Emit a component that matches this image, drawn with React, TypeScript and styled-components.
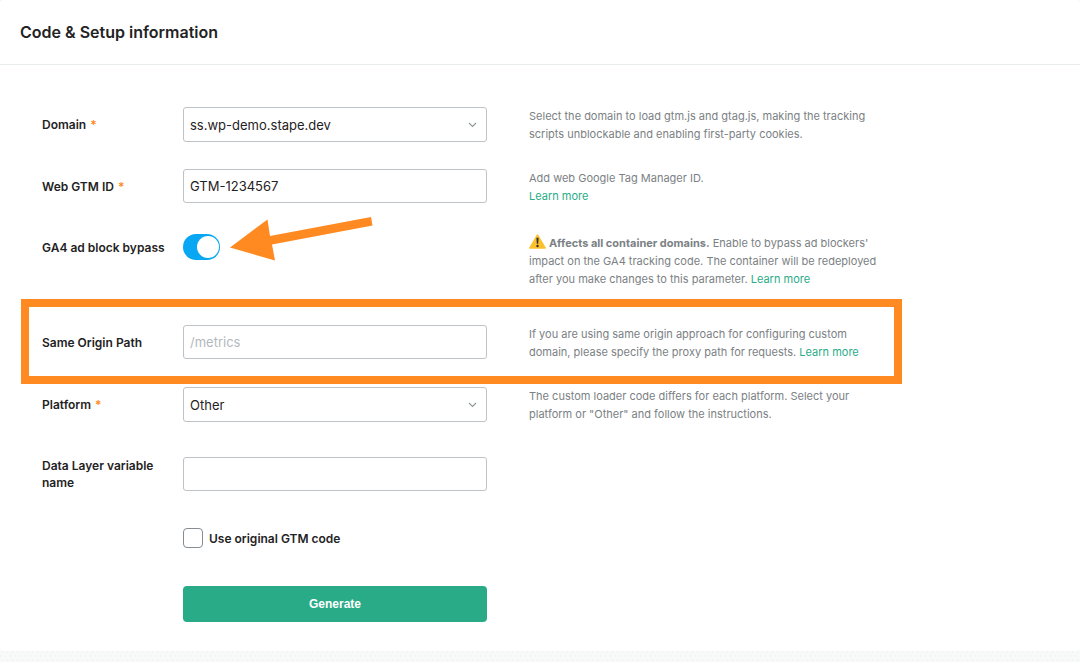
import React, { useState } from 'react';
import styled, { createGlobalStyle } from 'styled-components';

const GlobalStyle = createGlobalStyle`
  *, *::before, *::after { box-sizing: border-box; }
  body {
    margin: 0;
    min-height: 100vh;
    background-color: #f8faf9;
    background-image:
      radial-gradient(circle, #f0f3f3 1px, transparent 1px),
      radial-gradient(circle, #f0f3f3 1px, transparent 1px);
    background-size: 5px 8px;
    background-position: 0 0, 3px 4px;
    color: #1f2324;
    font-family: Inter, "Liberation Sans", sans-serif;
    font-size: 12px;
    line-height: 17px;
  }
`;

const Card = styled.main`
  background: #fff;
  border-radius: 4px;
`;

const Header = styled.header`
  padding: 20px;
  border-bottom: 1px solid #e8ebec;
`;

const Title = styled.h1`
  margin: 0;
  font-size: 16px;
  line-height: 24px;
  font-weight: 600;
`;

const Form = styled.form`
  padding: 42px 42px 29px;
`;

const Row = styled.div<{ $space?: number }>`
  position: relative;
  display: grid;
  grid-template-columns: 141px minmax(0, 304px) minmax(0, 400px);
  align-items: start;
  max-width: 845px;
  margin-top: ${({ $space = 0 }) => $space}px;
`;

const HighlightedRow = styled(Row)`
  &::after {
    content: '';
    position: absolute;
    inset: -26px -15px -23px -21px;
    border: 8px solid #ff8a22;
    pointer-events: none;
  }
`;

const Label = styled.label<{ $height?: number }>`
  display: flex;
  align-items: center;
  min-height: ${({ $height = 34 }) => $height}px;
  padding-right: 10px;
  font-weight: 600;
`;

const Required = styled.span`
  margin-left: 4px;
  color: #ff8a22;
`;

const Input = styled.input`
  width: 100%;
  height: 34px;
  padding: 0 6px;
  border: 1px solid #bdc3c6;
  border-radius: 3px;
  background: #fff;
  color: #1f2324;
  font: 400 13px/20px Inter, "Liberation Sans", sans-serif;
  &::placeholder { color: #b4b9bd; opacity: 1; }
`;

const SelectBox = styled.div`
  position: relative;
`;

const Select = styled.select`
  display: block;
  width: 100%;
  height: 35px;
  padding: 0 28px 0 6px;
  border: 1px solid #bdc3c6;
  border-radius: 3px;
  background: #fff;
  color: #1f2324;
  font: 400 13px/20px Inter, "Liberation Sans", sans-serif;
  appearance: none;
`;

const Chevron = styled.svg`
  position: absolute;
  top: 15px;
  right: 10px;
  width: 9px;
  height: 6px;
  pointer-events: none;
`;

const HelpText = styled.p`
  min-width: 0;
  margin: 0;
  padding-left: 42px;
  color: #7b8184;
  font-size: 11px;
  line-height: 18px;
`;

const Link = styled.a`
  color: #2aab87;
  text-decoration: none;
`;

const WarningIcon = styled.svg`
  width: 17px;
  height: 15px;
  margin-right: 3px;
  vertical-align: -2px;
`;

const SwitchBox = styled.div`
  position: relative;
  height: 26px;
`;

const Switch = styled.input`
  appearance: none;
  display: block;
  width: 37px;
  height: 26px;
  margin: 0;
  padding: 2px;
  border-radius: 13px;
  background: #c3c9cc;
  &::before {
    content: '';
    display: block;
    width: 22px;
    height: 22px;
    border-radius: 50%;
    background: #fff;
  }
  &:checked { background: #08a6f3; }
  &:checked::before { margin-left: 12px; }
`;

const Arrow = styled.svg`
  position: absolute;
  top: -18px;
  left: 46px;
  width: 146px;
  height: 46px;
  pointer-events: none;
`;

const CheckLabel = styled.label`
  grid-column: 2;
  display: flex;
  align-items: center;
  gap: 6px;
  font-weight: 600;
`;

const Checkbox = styled.input`
  appearance: none;
  width: 20px;
  height: 20px;
  margin: 0;
  border: 1px solid #858c92;
  border-radius: 4px;
  background: #fff;
  &:checked { background: #2aab87; }
`;

const Button = styled.button`
  grid-column: 2;
  height: 36px;
  border: 0;
  border-radius: 4px;
  background: #2aab87;
  color: #fff;
  font: 700 12px/17px "Liberation Sans", Arial, sans-serif;
`;

function Dropdown({ id, options }: { id: string; options: string[] }) {
  return (
    <SelectBox>
      <Select id={id}>
        {options.map((option) => (
          <option key={option}>{option}</option>
        ))}
      </Select>
      <Chevron viewBox="0 0 9 6" fill="none" stroke="#92999c" strokeWidth="1.2" aria-hidden="true">
        <path d="M1 1l3.5 3.5L8 1" />
      </Chevron>
    </SelectBox>
  );
}

export default function App() {
  const [bypass, setBypass] = useState(true);
  const [gtmId, setGtmId] = useState('GTM-1234567');

  return (
    <>
      <GlobalStyle />
      <Card>
        <Header>
          <Title>Code &amp; Setup information</Title>
        </Header>
        <Form onSubmit={(event) => event.preventDefault()}>
          <Row>
            <Label htmlFor="domain">Domain<Required>*</Required></Label>
            <Dropdown id="domain" options={['ss.wp-demo.stape.dev']} />
            <HelpText>
              Select the domain to load gtm.js and gtag.js, making the tracking scripts unblockable
              and enabling first-party cookies.
            </HelpText>
          </Row>
          <Row $space={26}>
            <Label htmlFor="gtm-id">Web GTM ID<Required>*</Required></Label>
            <Input id="gtm-id" value={gtmId} onChange={(event) => setGtmId(event.target.value)} />
            <HelpText>
              Add web Google Tag Manager ID.<br />
              <Link href="#gtm-id">Learn more</Link>
            </HelpText>
          </Row>
          <Row $space={29}>
            <Label htmlFor="bypass" $height={26}>GA4 ad block bypass</Label>
            <SwitchBox>
              <Switch
                id="bypass"
                type="checkbox"
                role="switch"
                checked={bypass}
                onChange={(event) => setBypass(event.target.checked)}
              />
              <Arrow viewBox="0 0 146 46" fill="#ff8a22" aria-hidden="true">
                <path d="M1 31.5L38.5 3.5L41 20L142 1L143.500 9.500L43 28.500L46 44.500Z" />
              </Arrow>
            </SwitchBox>
            <HelpText>
              <WarningIcon viewBox="0 0 17 15" aria-hidden="true">
                <path d="M8.500 1.200L16 14H1Z" fill="#fdbf2d" stroke="#fdbf2d" strokeWidth="1.600" strokeLinejoin="round" />
                <path d="M7.400 3.800h2.200l-.4 6H7.800z" fill="#24303a" />
                <circle cx="8.500" cy="12" r="1.200" fill="#24303a" />
              </WarningIcon>
              <strong>Affects all container domains.</strong> Enable to bypass ad blockers' impact on
              the GA4 tracking code. The container will be redeployed after you make changes to this
              parameter. <Link href="#bypass">Learn more</Link>
            </HelpText>
          </Row>
          <HighlightedRow $space={37}>
            <Label htmlFor="origin-path">Same Origin Path</Label>
            <Input id="origin-path" placeholder="/metrics" />
            <HelpText>
              If you are using same origin approach for configuring custom domain, please specify the
              proxy path for requests. <Link href="#origin-path">Learn more</Link>
            </HelpText>
          </HighlightedRow>
          <Row $space={26}>
            <Label htmlFor="platform">Platform<Required>*</Required></Label>
            <Dropdown id="platform" options={['Other']} />
            <HelpText>
              The custom loader code differs for each platform. Select your platform or "Other" and
              follow the instructions.
            </HelpText>
          </Row>
          <Row $space={34}>
            <Label htmlFor="data-layer">Data Layer variable name</Label>
            <Input id="data-layer" />
          </Row>
          <Row $space={37}>
            <CheckLabel>
              <Checkbox type="checkbox" />
              Use original GTM code
            </CheckLabel>
          </Row>
          <Row $space={38}>
            <Button type="submit">Generate</Button>
          </Row>
        </Form>
      </Card>
    </>
  );
}
